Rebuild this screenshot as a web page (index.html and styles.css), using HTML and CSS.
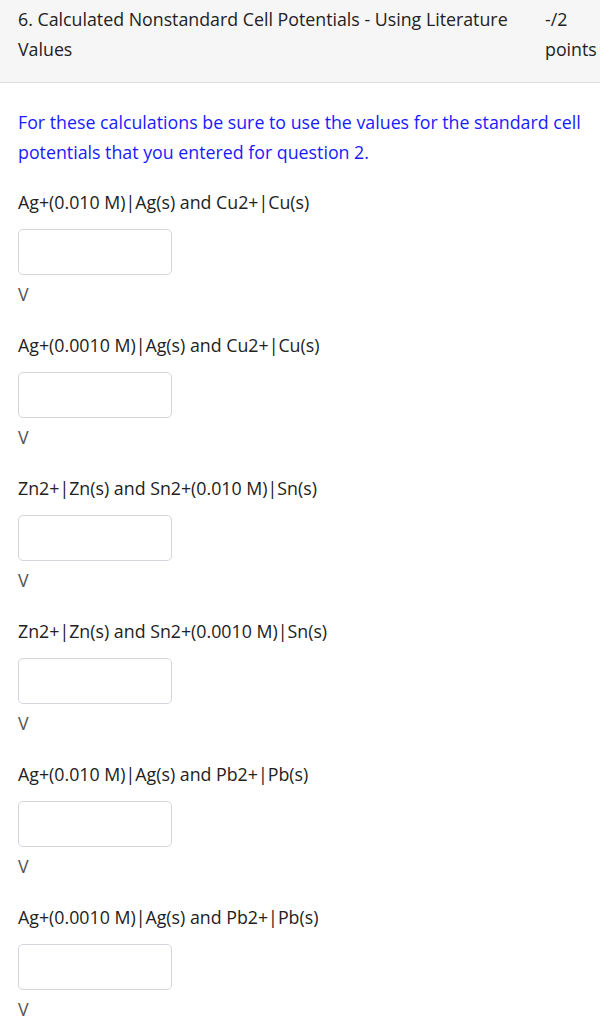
FILE: index.html
```html
<!DOCTYPE html>
<html>
<head>
<meta charset="utf-8">
<link rel="stylesheet" href="styles.css">
</head>
<body>
<div class="header">
  <div class="title">6. Calculated Nonstandard Cell Potentials - Using Literature Values</div>
  <div class="points">-/2<br>points</div>
</div>
<div class="content">
  <p class="intro">For these calculations be sure to use the values for the standard cell potentials that you entered for question 2.</p>
  <div class="q">
    <div class="label">Ag+(0.010 M)|Ag(s) and Cu2+|Cu(s)</div>
    <div class="box"></div>
    <div class="unit">V</div>
  </div>
  <div class="q">
    <div class="label">Ag+(0.0010 M)|Ag(s) and Cu2+|Cu(s)</div>
    <div class="box"></div>
    <div class="unit">V</div>
  </div>
  <div class="q">
    <div class="label">Zn2+|Zn(s) and Sn2+(0.010 M)|Sn(s)</div>
    <div class="box"></div>
    <div class="unit">V</div>
  </div>
  <div class="q">
    <div class="label">Zn2+|Zn(s) and Sn2+(0.0010 M)|Sn(s)</div>
    <div class="box"></div>
    <div class="unit">V</div>
  </div>
  <div class="q">
    <div class="label">Ag+(0.010 M)|Ag(s) and Pb2+|Pb(s)</div>
    <div class="box"></div>
    <div class="unit">V</div>
  </div>
  <div class="q">
    <div class="label">Ag+(0.0010 M)|Ag(s) and Pb2+|Pb(s)</div>
    <div class="box"></div>
    <div class="unit">V</div>
  </div>
</div>
</body>
</html>
```
FILE: styles.css
```css
html, body {
  margin: 0;
  padding: 0;
  background: #fff;
}
body {
  font-family: "Open Sans", "Noto Sans", sans-serif;
  font-size: 17.8px;
  color: #222;
}
.header {
  display: flex;
  background: #f6f6f6;
  border-bottom: 1px solid #dcdcdc;
  padding: 4px 0 18px 18px;
  line-height: 30px;
  height: 60px;
}
.title {
  flex: 1;
  padding-right: 20px;
}
.points {
  width: 55px;
}
.content {
  padding: 24px 18px 0 18px;
}
.intro {
  margin: 0;
  color: #1a1aff;
  line-height: 30px;
}
.q {
  margin-top: 20px;
}
.label {
  line-height: 30px;
}
.box {
  margin-top: 12px;
  width: 152px;
  height: 44px;
  border: 1px solid #d3d6db;
  border-radius: 5px;
  background: #fff;
}
.unit {
  margin-top: 4px;
  line-height: 30px;
  color: #555;
  height: 31px;
}
```
